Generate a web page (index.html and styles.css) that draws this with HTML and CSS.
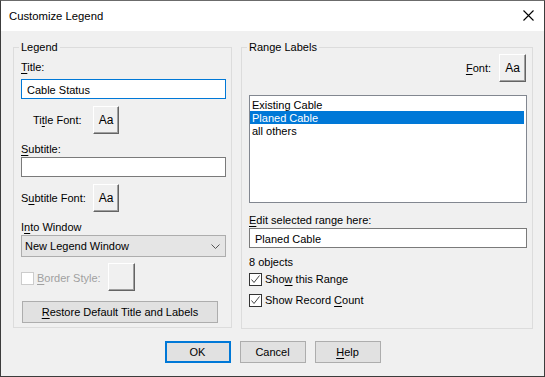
FILE: index.html
```html
<!DOCTYPE html>
<html lang="en">
<head>
    <meta charset="UTF-8">
    <title>Customize Legend</title>
    <link rel="stylesheet" href="styles.css">
</head>
<body>
    <div class="window">
        <div class="titlebar">
            <span class="title">Customize Legend</span>
            <svg class="close" width="11" height="11" viewBox="0 0 11 11">
                <path d="M0.5 0.5 L10.5 10.5 M10.5 0.5 L0.5 10.5" stroke="#000" stroke-width="1.1" fill="none"/>
            </svg>
        </div>

        <div class="dialog">
            <div class="groups">
                <fieldset class="group group-left">
                    <legend>Legend</legend>
                    <div class="label"><u>T</u>itle:</div>
                    <div class="input focused title-input">Cable Status</div>

                    <div class="font-row indent">
                        <span class="row-label">Ti<u>t</u>le Font:</span>
                        <span class="aa-btn">Aa</span>
                    </div>

                    <div class="label gap-top"><u>S</u>ubtitle:</div>
                    <div class="input"></div>

                    <div class="font-row">
                        <span class="row-label">S<u>u</u>btitle Font:</span>
                        <span class="aa-btn">Aa</span>
                    </div>

                    <div class="label gap-top">I<u>n</u>to Window</div>
                    <div class="combo">
                        <span>New Legend Window</span>
                        <svg width="9" height="5" viewBox="0 0 9 5">
                            <path d="M0.5 0.5 L4.5 4.5 L8.5 0.5" stroke="#555" fill="none"/>
                        </svg>
                    </div>

                    <div class="border-row">
                        <span class="check disabled"></span>
                        <span class="disabled-text"><u>B</u>order Style:</span>
                        <span class="aa-btn wide"></span>
                    </div>

                    <div class="restore-btn"><u>R</u>estore Default Title and Labels</div>
                </fieldset>

                <fieldset class="group group-right">
                    <legend>Range Labels</legend>
                    <div class="font-top">
                        <span><u>F</u>ont:</span>
                        <span class="aa-btn wide">Aa</span>
                    </div>

                    <div class="listbox">
                        <div class="item">Existing Cable</div>
                        <div class="item selected">Planed Cable</div>
                        <div class="item">all others</div>
                    </div>

                    <div class="label edit-label"><u>E</u>dit selected range here:</div>
                    <div class="input">Planed Cable</div>

                    <div class="label count">8 objects</div>

                    <div class="check-row first">
                        <span class="check">
                            <svg width="11" height="11" viewBox="0 0 11 11"><path d="M1.5 5.5 L4 8.5 L9.5 1.5" stroke="#444" fill="none"/></svg>
                        </span>
                        <span>Sho<u>w</u> this Range</span>
                    </div>
                    <div class="check-row">
                        <span class="check">
                            <svg width="11" height="11" viewBox="0 0 11 11"><path d="M1.5 5.5 L4 8.5 L9.5 1.5" stroke="#444" fill="none"/></svg>
                        </span>
                        <span>Show Record <u>C</u>ount</span>
                    </div>
                </fieldset>
            </div>

            <div class="buttons">
                <span class="btn default">OK</span>
                <span class="btn">Cancel</span>
                <span class="btn"><u>H</u>elp</span>
            </div>
        </div>
    </div>
</body>
</html>
```

FILE: styles.css
```css
body {
    margin: 0;
    font-family: "Liberation Sans", Arial, sans-serif;
    font-size: 11px;
    color: #000;
}
u {
    text-decoration-thickness: 1px;
    text-underline-offset: 2px;
}
.window {
    width: 545px;
    height: 377px;
    box-sizing: border-box;
    border: 1px solid #3c3c3c;
    border-top-color: #6b6b6b;
    background: #f0f0f0;
    display: flex;
    flex-direction: column;
}
.titlebar {
    height: 30px;
    background: #fff;
    display: flex;
    align-items: center;
    justify-content: space-between;
    padding: 0 10px 0 8px;
}
.title {
    font-size: 11.3px;
    margin-top: -1px;
}
.close {
    margin-top: -1px;
}
.dialog {
    flex: 1;
    display: flex;
    flex-direction: column;
    padding: 9px 0 0 12px;
}
.groups {
    display: flex;
    gap: 9px;
}
.group {
    margin: 0;
    border: 1px solid #dcdcdc;
    line-height: 15px;
}
.group legend {
    padding: 0 2px;
    margin-left: -2px;
}
.group-left {
    width: 219px;
    height: 288px;
    box-sizing: border-box;
    padding: 4px 5px 0 7px;
}
.group-right {
    width: 292px;
    height: 289px;
    box-sizing: border-box;
    padding: 0 5px 0 7px;
}
.label {
    height: 15px;
    padding-top: 1px;
    box-sizing: border-box;
}
.gap-top {
    margin-top: 7px;
}
.input {
    height: 20px;
    box-sizing: border-box;
    border: 1px solid #7a7a7a;
    background: #fff;
    padding: 2px 5px 0;
    line-height: 16px;
    margin-top: 1px;
}
.input.title-input {
    margin-top: 5px;
}
.input.focused {
    border-color: #0078d7;
}
.font-row {
    display: flex;
    align-items: center;
    margin-top: 7px;
}
.font-row .row-label {
    width: 72px;
}
.font-row.indent {
    padding-left: 12px;
}
.font-row.indent .row-label {
    width: 60px;
}
.aa-btn {
    width: 26px;
    height: 28px;
    box-sizing: border-box;
    border: 1px solid;
    border-color: #fff #646464 #646464 #fff;
    box-shadow: inset -1px -1px 0 #a0a0a0;
    display: flex;
    align-items: center;
    justify-content: center;
    font-size: 12px;
}
.aa-btn.wide {
    width: 27px;
}
.combo {
    height: 22px;
    box-sizing: border-box;
    border: 1px solid #adadad;
    background: #e5e5e5;
    margin-top: 1px;
    display: flex;
    align-items: center;
    justify-content: space-between;
    padding: 1px 5px 0 3px;
}
.border-row {
    display: flex;
    align-items: center;
    margin-top: 6px;
}
.check {
    width: 13px;
    height: 13px;
    box-sizing: border-box;
    border: 1px solid #333;
    background: #fff;
    display: flex;
    align-items: center;
    justify-content: center;
    flex: none;
}
.check.disabled {
    border-color: #cccccc;
    margin-top: 3px;
}
.disabled-text {
    color: #a0a0a0;
    margin: 3px 0 0 3px;
    width: 71px;
    white-space: nowrap;
}
.restore-btn {
    width: 196px;
    height: 22px;
    box-sizing: border-box;
    margin: 10px 0 0 1px;
    border: 1px solid #adadad;
    background: #e1e1e1;
    display: flex;
    align-items: center;
    justify-content: center;
}
.font-top {
    display: flex;
    align-items: center;
    justify-content: flex-end;
    gap: 8px;
    margin-top: -1px;
    padding-right: 1px;
}
.listbox {
    height: 108px;
    box-sizing: border-box;
    border: 1px solid #828790;
    background: #fff;
    margin-top: 13px;
    padding: 2px 2px 0 0;
    line-height: 14px;
}
.item {
    height: 13px;
    padding-left: 2px;
}
.item.selected {
    background: #0078d7;
    color: #fff;
}
.edit-label {
    margin-top: 9px;
}
.count {
    margin-top: 6px;
}
.check-row {
    display: flex;
    align-items: center;
    gap: 3px;
    height: 15px;
    margin-top: 6px;
}
.check-row.first {
    margin-top: 3px;
}
.buttons {
    display: flex;
    justify-content: center;
    gap: 9px;
    margin: 12px 0 0 -12px;
}
.btn {
    width: 66px;
    height: 22px;
    box-sizing: border-box;
    border: 1px solid #adadad;
    background: #e1e1e1;
    display: flex;
    align-items: center;
    justify-content: center;
}
.btn.default {
    border: 2px solid #0078d7;
}
```
